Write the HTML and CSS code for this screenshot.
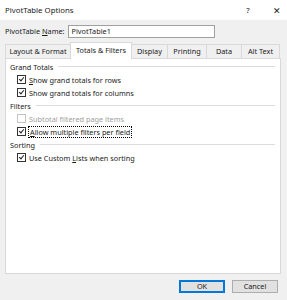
FILE: index.html
```html
<!DOCTYPE html>
<html lang="en">
<head>
<meta charset="UTF-8">
<meta name="viewport" content="width=device-width, initial-scale=1.0">
<title>PivotTable Options</title>
<link rel="stylesheet" href="styles.css">
</head>
<body>

<div class="dialog">
  <div class="titlebar">
    <span class="title">PivotTable Options</span>
    <span class="help">?</span>
    <span class="close">&#x2715;</span>
  </div>

  <div class="name-row">
    <label>PivotTable <u>N</u>ame:</label>
    <div class="input">PivotTable1</div>
  </div>

  <div class="tabs">
    <div class="tab">Layout &amp; Format</div>
    <div class="tab active">Totals &amp; Filters</div>
    <div class="tab">Display</div>
    <div class="tab">Printing</div>
    <div class="tab">Data</div>
    <div class="tab">Alt Text</div>
  </div>

  <div class="panel">
    <div class="group">Grand Totals</div>
    <div class="check"><span class="box checked"></span><span><u>S</u>how grand totals for rows</span></div>
    <div class="check"><span class="box checked"></span><span>Show <u>g</u>rand totals for columns</span></div>

    <div class="group">Filters</div>
    <div class="check disabled"><span class="box"></span><span>Subtotal filtered page items</span></div>
    <div class="check"><span class="box checked"></span><span class="focus"><u>A</u>llow multiple filters per field</span></div>

    <div class="group">Sorting</div>
    <div class="check"><span class="box checked"></span><span>Use Custom <u>L</u>ists when sorting</span></div>
  </div>

  <div class="footer">
    <div class="btn default">OK</div>
    <div class="btn">Cancel</div>
  </div>
</div>

</body>
</html>
```

FILE: styles.css
```css
body {
  margin: 0;
  background-color: #f0f0f0;
  font-family: "Noto Sans", "Open Sans", sans-serif;
  font-size: 7.3px;
  color: #1a1a1a;
  white-space: nowrap;
}

.dialog {
  width: 287px;
  height: 300px;
  display: flex;
  flex-direction: column;
}

.titlebar {
  height: 20px;
  display: flex;
  align-items: center;
  padding: 0 5px;
  background-color: #fff;
  font-size: 7.8px;
}

.title {
  flex: 1;
}

.help {
  width: 10px;
  margin-right: 19px;
  text-align: center;
}

.close {
  width: 10px;
  text-align: center;
  font-size: 9px;
}

.name-row {
  display: flex;
  align-items: center;
  padding: 4px 5px 0;
  height: 14px;
}

.name-row label {
  flex: none;
  margin-right: 3px;
}

.input {
  width: 142px;
  height: 11px;
  line-height: 11px;
  padding-left: 3px;
  border: 1px solid #a0a0a0;
  background-color: #fff;
}

.tabs {
  display: flex;
  align-items: flex-end;
  margin: 4px 0 0 5px;
  height: 16px;
}

.tab {
  height: 13px;
  line-height: 13px;
  border: 1px solid #d9d9d9;
  border-bottom: none;
  margin-right: -1px;
  background-color: #f0f0f0;
  text-align: center;
}

.tab:nth-child(1) { width: 64px; }
.tab:nth-child(2) { width: 60px; }
.tab:nth-child(3) { width: 35px; }
.tab:nth-child(4) { width: 38px; }
.tab:nth-child(5) { width: 34px; }
.tab:nth-child(6) { width: 37px; }

.tab.active {
  height: 16px;
  line-height: 15px;
  background-color: #fff;
  position: relative;
  z-index: 1;
  margin-bottom: -1px;
}

.panel {
  margin: 0 6px 0 5px;
  height: 213px;
  border: 1px solid #d9d9d9;
  background-color: #fff;
  padding: 1px 5px 0 4px;
}

.group {
  display: flex;
  align-items: center;
  height: 13px;
}

.group::after {
  content: "";
  flex: 1;
  height: 1px;
  margin-left: 5px;
  background-color: #dcdcdc;
}

.check {
  display: flex;
  align-items: center;
  height: 13px;
  padding-left: 7px;
}

.box {
  width: 7px;
  height: 7px;
  border: 1px solid #333;
  margin-right: 3px;
  position: relative;
}

.box.checked::after {
  content: "";
  position: absolute;
  left: 2px;
  top: 0;
  width: 2px;
  height: 4px;
  border: solid #222;
  border-width: 0 1px 1px 0;
  transform: rotate(40deg);
}

.check.disabled {
  color: #a0a0a0;
}

.check.disabled .box {
  border-color: #c4c4c4;
}

.focus {
  outline: 1px dotted #000;
  padding: 0 1px;
}

.footer {
  display: flex;
  justify-content: flex-end;
  gap: 7px;
  padding: 6px 9px 0 0;
}

.btn {
  width: 44px;
  height: 11px;
  line-height: 11px;
  border: 1px solid #adadad;
  background-color: #e1e1e1;
  text-align: center;
}

.btn.default {
  border-color: #0078d7;
  box-shadow: inset 0 0 0 1px #0078d7;
}
```
